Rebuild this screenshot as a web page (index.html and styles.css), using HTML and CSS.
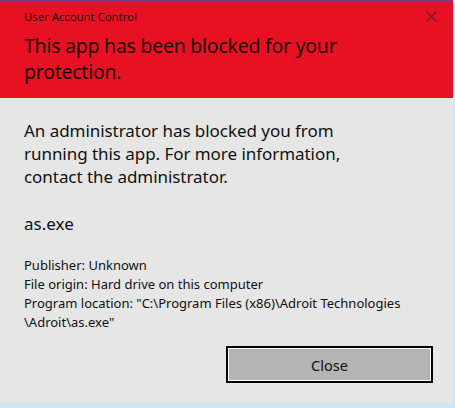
FILE: index.html
```html
<!DOCTYPE html>
<html>
<head>
<meta charset="utf-8">
<link rel="stylesheet" href="styles.css">
</head>
<body>
<div class="window">
  <div class="header">
    <div class="titlebar">
      <span class="title">User Account Control</span>
      <svg class="close-x" width="11" height="11" viewBox="0 0 11 11"><path d="M0.5 0.5 L10.5 10.5 M10.5 0.5 L0.5 10.5" stroke="#6b1a20" stroke-width="1.1" fill="none"/></svg>
    </div>
    <div class="heading">This app has been blocked for your protection.</div>
  </div>
  <div class="content">
    <p class="message">An administrator has blocked you from running this app. For more information, contact the administrator.</p>
    <p class="app">as.exe</p>
    <div class="details">
      <div>Publisher: Unknown</div>
      <div>File origin: Hard drive on this computer</div>
      <div>Program location: "C:\Program Files (x86)\Adroit Technologies<br>\Adroit\as.exe"</div>
    </div>
    <div class="actions">
      <button class="btn">Close</button>
    </div>
  </div>
</div>
</body>
</html>
```
FILE: styles.css
```css
html, body {
  margin: 0;
  padding: 0;
}
body {
  width: 455px;
  height: 408px;
  background: #cbe7f4;
  font-family: "Noto Sans", "Open Sans", sans-serif;
  overflow: hidden;
}
.window {
  width: 453px;
  height: 403px;
  background: #e6e6e6;
  border-top: 2px solid #7e3b7c;
  box-sizing: border-box;
  display: flex;
  flex-direction: column;
}
.header {
  background: #e81123;
  height: 96px;
  padding: 0 24px;
  box-sizing: border-box;
  color: #1c0306;
}
.titlebar {
  display: flex;
  justify-content: space-between;
  align-items: center;
  height: 29px;
  margin-right: -8px;
}
.title {
  font-size: 11.5px;
  color: #2a0508;
  letter-spacing: -0.1px;
}
.close-x {
  display: block;
}
.heading {
  margin-top: 2px;
  font-size: 19.5px;
  line-height: 26px;
  letter-spacing: -0.25px;
  width: 330px;
}
.content {
  padding: 21px 24px 0 24px;
  color: #111;
}
.message {
  margin: 0;
  font-size: 17px;
  line-height: 23px;
  width: 330px;
  letter-spacing: -0.05px;
}
.app {
  margin: 24px 0 0 0;
  font-size: 17px;
  line-height: 23px;
}
.details {
  margin-top: 21px;
  font-size: 13px;
  line-height: 19px;
}
.actions {
  display: flex;
  justify-content: flex-end;
  margin-top: 14px;
}
.btn {
  width: 207px;
  height: 37px;
  margin-right: -4px;
  background: #b4b4b4;
  border: 2px solid #000;
  box-shadow: inset 0 0 0 1px #fff;
  font-family: inherit;
  font-size: 14.5px;
  color: #111;
  padding: 0;
}
```
